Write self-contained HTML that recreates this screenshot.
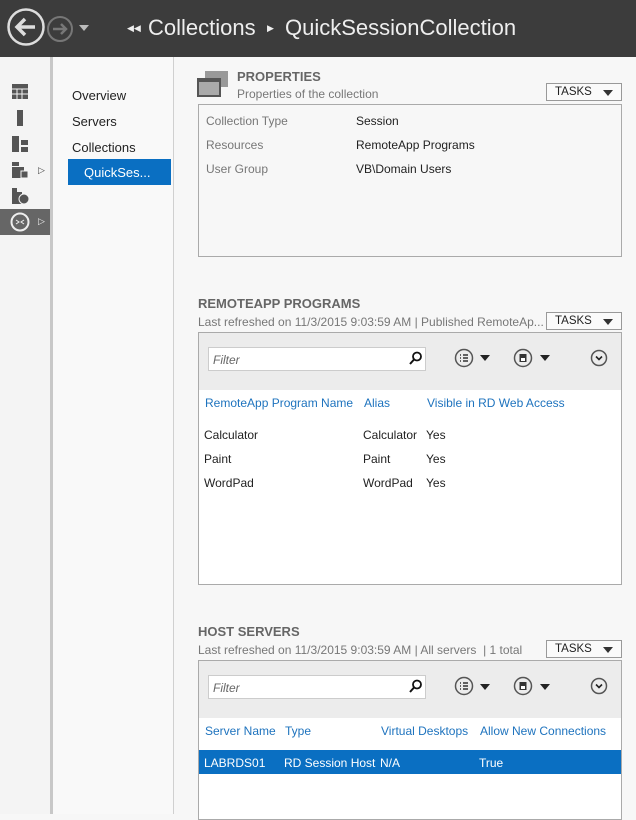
<!DOCTYPE html>
<html><head><style>
*{margin:0;padding:0;box-sizing:border-box}
body{width:636px;height:814px;overflow:hidden;background:#f7f7f7;font-family:"Liberation Sans",sans-serif;font-size:12px;color:#222;position:relative}
.a{position:absolute;white-space:nowrap}
.top{left:0;top:0;width:636px;height:57px;background:#3c3c3c}
.g{color:#777}
.h{font-weight:bold;color:#666;font-size:13px}
.tasks{width:76px;height:18px;border:1px solid #999;background:#fafafa;font-size:11.5px;line-height:16px;padding:0 0 0 8px;color:#222}
.tasks:after{content:"";position:absolute;right:8px;top:6px;border:5px solid transparent;border-top:6px solid #333;border-bottom:0}
.box{border:1px solid #aaa}
.tb{background:#ececec}
.filt{width:218px;height:24px;background:#fff;border:1px solid #ccc;font-style:italic;color:#666;padding:5px 4px}
.tri{border:5px solid transparent;border-top:6px solid #222;border-bottom:0}
.lnk{color:#1e73be}
</style></head><body>
<div class="a top"></div>
<svg class="a" style="left:6px;top:7px" width="40" height="40"><circle cx="20" cy="20" r="17.5" fill="none" stroke="#ddd" stroke-width="2.5"/><path d="M29 20H12M19 12l-8 8 8 8" fill="none" stroke="#ddd" stroke-width="3.5"/></svg>
<svg class="a" style="left:46px;top:15px" width="28" height="28"><circle cx="14" cy="14" r="12" fill="none" stroke="#777" stroke-width="2"/><path d="M7 14h13M15 9l5 5-5 5" fill="none" stroke="#777" stroke-width="2.5"/></svg>
<div class="a" style="left:79px;top:25px;border:5px solid transparent;border-top:6px solid #bbb;border-bottom:0"></div>
<div class="a" style="left:127px;top:23px;color:#eee;font-size:9px">&#9664;&#9664;</div>
<div class="a" style="left:148px;top:15px;color:#eee;font-size:22px">Collections</div>
<div class="a" style="left:267px;top:23px;color:#eee;font-size:9px">&#9654;</div>
<div class="a" style="left:285px;top:15px;color:#eee;font-size:22px">QuickSessionCollection</div>

<div class="a" style="left:0;top:57px;width:50px;height:757px;background:#f4f4f4"></div>
<div class="a" style="left:50px;top:57px;width:3px;height:757px;background:#c8c8c8"></div>
<div class="a" style="left:53px;top:57px;width:120px;height:757px;background:#f9f9f9"></div>
<div class="a" style="left:173px;top:57px;width:1px;height:757px;background:#d0d0d0"></div>
<svg class="a" style="left:12px;top:84px" width="16" height="16"><rect width="16" height="15" fill="#555"/><path d="M0 5h16M0 10h16M5 5v10M10 5v10" stroke="#f4f4f4" stroke-width="1"/></svg>
<div class="a" style="left:17px;top:110px;width:6px;height:16px;background:#555"></div>
<svg class="a" style="left:12px;top:136px" width="16" height="16"><rect width="7" height="16" fill="#555"/><rect x="9" y="4" width="7" height="5" fill="#555"/><rect x="9" y="11" width="7" height="5" fill="#555"/></svg>
<svg class="a" style="left:12px;top:162px" width="16" height="16"><rect width="7" height="4" fill="#555"/><rect y="5" width="12" height="11" fill="#555"/><rect x="9" y="9" width="7" height="7" fill="#555" stroke="#f4f4f4"/></svg>
<div class="a" style="left:38px;top:165px;color:#444;font-size:9px">&#9655;</div>
<svg class="a" style="left:12px;top:188px" width="18" height="18"><rect width="5" height="16" fill="#555"/><rect y="4" width="10" height="12" fill="#555"/><circle cx="12" cy="11" r="5" fill="#555" stroke="#f4f4f4"/></svg>
<div class="a" style="left:0;top:209px;width:50px;height:26px;background:#666"></div>
<svg class="a" style="left:10px;top:212px" width="20" height="20"><circle cx="10" cy="10" r="8.5" fill="none" stroke="#eee" stroke-width="2"/><path d="M6 8l3 2-3 2M14 8l-3 2 3 2" stroke="#eee" fill="none"/></svg>
<div class="a" style="left:38px;top:216px;color:#eee;font-size:9px">&#9655;</div>
<div class="a" style="left:72px;top:88px;font-size:13px">Overview</div>
<div class="a" style="left:72px;top:114px;font-size:13px">Servers</div>
<div class="a" style="left:72px;top:140px;font-size:13px">Collections</div>
<div class="a" style="left:68px;top:159px;width:103px;height:26px;background:#0a6fc2;color:#fff;font-size:13px;padding:6px 0 0 16px">QuickSes...</div>

<div class="a" style="left:205px;top:71px;width:23px;height:16px;background:#999"></div>
<div class="a" style="left:197px;top:78px;width:24px;height:19px;background:#aaa;border:2px solid #555;border-top-width:4px"></div>
<div class="a h" style="left:237px;top:69px">PROPERTIES</div>
<div class="a g" style="left:237px;top:87px">Properties of the collection</div>
<div class="a tasks" style="left:546px;top:83px">TASKS</div>
<div class="a box" style="left:198px;top:104px;width:424px;height:153px"></div>
<div class="a g" style="left:206px;top:114px">Collection Type</div>
<div class="a g" style="left:206px;top:138px">Resources</div>
<div class="a g" style="left:206px;top:162px">User Group</div>
<div class="a" style="left:356px;top:114px">Session</div>
<div class="a" style="left:356px;top:138px">RemoteApp Programs</div>
<div class="a" style="left:356px;top:162px">VB\Domain Users</div>

<div class="a h" style="left:198px;top:296px">REMOTEAPP PROGRAMS</div>
<div class="a g" style="left:198px;top:315px">Last refreshed on 11/3/2015 9:03:59 AM | Published RemoteAp...</div>
<div class="a tasks" style="left:546px;top:312px">TASKS</div>
<div class="a box" style="left:198px;top:332px;width:424px;height:253px;background:#fff"></div>
<div class="a tb" style="left:199px;top:333px;width:422px;height:57px"></div>
<div class="a filt" style="left:208px;top:347px">Filter</div>
<svg class="a" style="left:409px;top:351px" width="14" height="14"><circle cx="8" cy="5.5" r="4" fill="none" stroke="#111" stroke-width="1.8"/><path d="M5 8.5L1 13" stroke="#111" stroke-width="2"/></svg>
<svg class="a" style="left:454px;top:348px" width="20" height="20"><circle cx="10" cy="10" r="8.5" fill="none" stroke="#555" stroke-width="1.5"/><path d="M6 7h1M6 10h1M6 13h1M9 7h5M9 10h5M9 13h5" stroke="#333" stroke-width="1.6"/></svg><div class="a tri" style="left:480px;top:355px"></div>
<svg class="a" style="left:513px;top:348px" width="20" height="20"><circle cx="10" cy="10" r="8.5" fill="none" stroke="#555" stroke-width="1.5"/><rect x="6.5" y="6" width="7" height="8" fill="#333"/><rect x="8" y="10" width="4" height="3" fill="#fff"/></svg><div class="a tri" style="left:540px;top:355px"></div>
<svg class="a" style="left:590px;top:349px" width="18" height="18"><circle cx="9" cy="9" r="7.5" fill="none" stroke="#555" stroke-width="1.5"/><path d="M6 7.5l3 3 3-3" fill="none" stroke="#222" stroke-width="1.6"/></svg>
<div class="a lnk" style="left:205px;top:396px">RemoteApp Program Name</div>
<div class="a lnk" style="left:364px;top:396px">Alias</div>
<div class="a lnk" style="left:427px;top:396px">Visible in RD Web Access</div>
<div class="a" style="left:204px;top:428px">Calculator</div><div class="a" style="left:363px;top:428px">Calculator</div><div class="a" style="left:426px;top:428px">Yes</div>
<div class="a" style="left:204px;top:452px">Paint</div><div class="a" style="left:363px;top:452px">Paint</div><div class="a" style="left:426px;top:452px">Yes</div>
<div class="a" style="left:204px;top:476px">WordPad</div><div class="a" style="left:363px;top:476px">WordPad</div><div class="a" style="left:426px;top:476px">Yes</div>

<div class="a h" style="left:198px;top:624px">HOST SERVERS</div>
<div class="a g" style="left:198px;top:643px">Last refreshed on 11/3/2015 9:03:59 AM | All servers &nbsp;| 1 total</div>
<div class="a tasks" style="left:546px;top:640px">TASKS</div>
<div class="a box" style="left:198px;top:660px;width:424px;height:160px;background:#fff"></div>
<div class="a tb" style="left:199px;top:661px;width:422px;height:57px"></div>
<div class="a filt" style="left:208px;top:675px">Filter</div>
<svg class="a" style="left:409px;top:679px" width="14" height="14"><circle cx="8" cy="5.5" r="4" fill="none" stroke="#111" stroke-width="1.8"/><path d="M5 8.5L1 13" stroke="#111" stroke-width="2"/></svg>
<svg class="a" style="left:454px;top:676px" width="20" height="20"><circle cx="10" cy="10" r="8.5" fill="none" stroke="#555" stroke-width="1.5"/><path d="M6 7h1M6 10h1M6 13h1M9 7h5M9 10h5M9 13h5" stroke="#333" stroke-width="1.6"/></svg><div class="a tri" style="left:480px;top:684px"></div>
<svg class="a" style="left:513px;top:676px" width="20" height="20"><circle cx="10" cy="10" r="8.5" fill="none" stroke="#555" stroke-width="1.5"/><rect x="6.5" y="6" width="7" height="8" fill="#333"/><rect x="8" y="10" width="4" height="3" fill="#fff"/></svg><div class="a tri" style="left:540px;top:684px"></div>
<svg class="a" style="left:590px;top:677px" width="18" height="18"><circle cx="9" cy="9" r="7.5" fill="none" stroke="#555" stroke-width="1.5"/><path d="M6 7.5l3 3 3-3" fill="none" stroke="#222" stroke-width="1.6"/></svg>
<div class="a lnk" style="left:205px;top:724px">Server Name</div>
<div class="a lnk" style="left:285px;top:724px">Type</div>
<div class="a lnk" style="left:381px;top:724px">Virtual Desktops</div>
<div class="a lnk" style="left:480px;top:724px">Allow New Connections</div>
<div class="a" style="left:199px;top:750px;width:422px;height:24px;background:#0a6fc2"></div>
<div class="a" style="left:204px;top:756px;color:#fff">LABRDS01</div>
<div class="a" style="left:284px;top:756px;color:#fff">RD Session Host</div>
<div class="a" style="left:380px;top:756px;color:#fff">N/A</div>
<div class="a" style="left:479px;top:756px;color:#fff">True</div>
</body></html>
